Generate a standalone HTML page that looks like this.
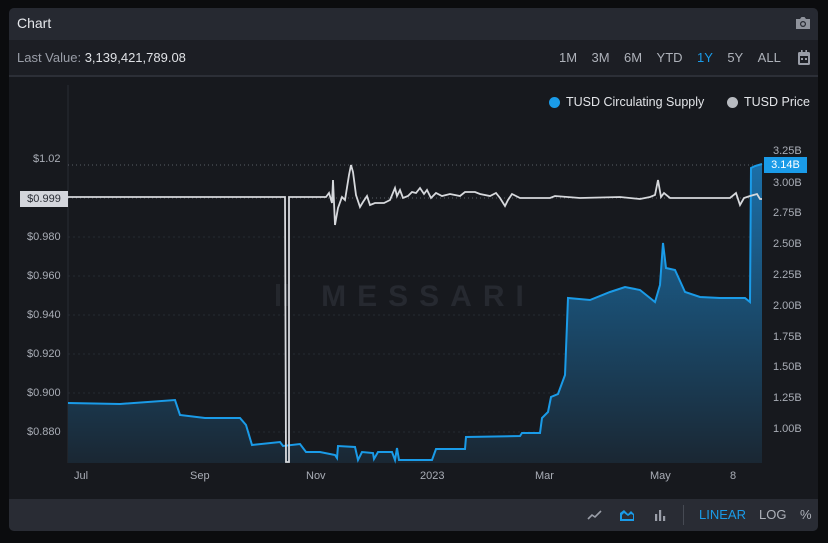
<!DOCTYPE html>
<html><head><style>
*{margin:0;padding:0;box-sizing:border-box}
body{width:828px;height:543px;background:#0b0c0e;font-family:"Liberation Sans",sans-serif;position:relative;overflow:hidden}
.panel{position:absolute;left:9px;top:8px;width:809px;height:523px;background:#17191e;border-radius:5px;overflow:hidden}
.hdr{position:absolute;left:0;top:0;width:100%;height:32px;background:#262931;color:#e6e8ec;font-size:14px;line-height:31px;padding-left:8px}
.row{position:absolute;left:0;top:32px;width:100%;height:37px;background:#1c1e24;border-bottom:2px solid #2c2f37;font-size:13px;line-height:36px;color:#9a9ea8;padding-left:8px}
.row b{font-weight:normal;color:#dfe1e5}
.bot{position:absolute;left:0;bottom:0;width:100%;height:32px;background:#292c34}
.t{position:absolute;font-size:11px;color:#a9adb6;white-space:nowrap}
</style></head><body>
<div class="panel">
<div class="hdr">Chart
<svg style="position:absolute;left:786px;top:8px" width="16" height="14" viewBox="0 0 16 14"><path d="M1 3h4l1.5-2h3L11 3h4v10H1z" fill="#8f939c"/><circle cx="8" cy="8" r="3" fill="#262931"/><circle cx="8" cy="8" r="1.8" fill="#8f939c"/></svg>
</div>
<div class="row">Last Value: <b>3,139,421,789.08</b>
<span style="position:absolute;left:550px;top:0;color:#aeb2ba;word-spacing:0">1M&nbsp;&nbsp;&nbsp;&nbsp;3M&nbsp;&nbsp;&nbsp;&nbsp;6M&nbsp;&nbsp;&nbsp;&nbsp;YTD&nbsp;&nbsp;&nbsp;&nbsp;<span style="color:#1a9be8">1Y</span>&nbsp;&nbsp;&nbsp;&nbsp;5Y&nbsp;&nbsp;&nbsp;&nbsp;ALL</span>
<svg style="position:absolute;left:788px;top:10px" width="14" height="16" viewBox="0 0 14 16"><rect x="1" y="2" width="12" height="13" rx="1.5" fill="#9a9ea8"/><rect x="3" y="6" width="8" height="7" fill="#1c1e24"/><rect x="4" y="0" width="1.6" height="4" fill="#9a9ea8"/><rect x="8.4" y="0" width="1.6" height="4" fill="#9a9ea8"/><rect x="4" y="8" width="2" height="2" fill="#9a9ea8"/><rect x="8" y="8" width="2" height="2" fill="#9a9ea8"/></svg>
</div>
<div class="bot">
<svg style="position:absolute;left:578px;top:10px" width="16" height="12" viewBox="0 0 16 12"><path d="M1 10l4-4 3 2 6-6" stroke="#9a9ea8" stroke-width="1.6" fill="none"/></svg>
<svg style="position:absolute;left:610px;top:9px" width="16" height="14" viewBox="0 0 16 14"><path d="M1 13V5l4-3 4 4 3-3 3 3v7z" fill="#1a9be8"/><path d="M3 11V7l2-2 4 3 3-2 2 1v4z" fill="#292c34"/></svg>
<svg style="position:absolute;left:644px;top:9px" width="14" height="14" viewBox="0 0 14 14"><rect x="2" y="6" width="2.2" height="7" fill="#9a9ea8"/><rect x="6" y="2" width="2.2" height="11" fill="#9a9ea8"/><rect x="10" y="8" width="2.2" height="5" fill="#9a9ea8"/></svg>
<div style="position:absolute;left:674px;top:6px;width:1px;height:20px;background:#464a53"></div>
<span class="t" style="left:690px;top:8px;font-size:13px;color:#1a9be8">LINEAR</span>
<span class="t" style="left:750px;top:8px;font-size:13px;color:#aeb2ba">LOG</span>
<span class="t" style="left:791px;top:8px;font-size:13px;color:#aeb2ba">%</span>
</div>
</div>
<svg style="position:absolute;left:0;top:0" width="828" height="543">
<defs><linearGradient id="g" x1="0" y1="0" x2="0" y2="1"><stop offset="0" stop-color="#1b6fa8"/><stop offset="1" stop-color="#1a2733"/></linearGradient></defs>
<g stroke="#262a31" stroke-width="1" stroke-dasharray="2,3">
<line x1="68" y1="237" x2="762" y2="237"/><line x1="68" y1="276" x2="762" y2="276"/><line x1="68" y1="315" x2="762" y2="315"/><line x1="68" y1="354" x2="762" y2="354"/><line x1="68" y1="393" x2="762" y2="393"/><line x1="68" y1="432" x2="762" y2="432"/>
</g>
<line x1="68" y1="85" x2="68" y2="463" stroke="#2a2d34"/>
<line x1="68" y1="165" x2="762" y2="165" stroke="#5a5e66" stroke-dasharray="1,3"/>
<line x1="68" y1="198" x2="762" y2="198" stroke="#5a5e66" stroke-dasharray="1,3"/>
<rect x="276" y="284" width="4" height="22" fill="#24272d"/><rect x="284" y="284" width="4" height="22" fill="#24272d"/>
<text x="428" y="306" text-anchor="middle" font-family="Liberation Sans" font-weight="bold" font-size="30" letter-spacing="11" fill="#262930">MESSARI</text>
<path d="M68 403L120 404L175 400L180 415L205 418L240 418L246 425L252 445L280 442L283 446L300 444L306 452L320 452L335 455L337 458L338 446L355 447L358 460L362 452L373 453L374 459L378 452L392 452L395 460L397 448L399 460L432 460L436 449L465 449L466 437L520 436L522 433L540 433L542 418L548 412L551 397L558 394L565 375L568 298L590 300L610 292L625 287L640 290L650 298L655 302L660 285L663 243L666 268L675 270L685 292L700 297L720 298L745 298L750 302L751 168L755 166L762 164L762 463L68 463Z" fill="url(#g)" stroke="none"/>
<path d="M68 403L120 404L175 400L180 415L205 418L240 418L246 425L252 445L280 442L283 446L300 444L306 452L320 452L335 455L337 458L338 446L355 447L358 460L362 452L373 453L374 459L378 452L392 452L395 460L397 448L399 460L432 460L436 449L465 449L466 437L520 436L522 433L540 433L542 418L548 412L551 397L558 394L565 375L568 298L590 300L610 292L625 287L640 290L650 298L655 302L660 285L663 243L666 268L675 270L685 292L700 297L720 298L745 298L750 302L751 168L755 166L762 164" fill="none" stroke="#1a9be8" stroke-width="2"/>
<path d="M68 197L285 197L286 462L289 462L289 197L326 197L329 193L332 203L333 180L335 225L338 208L342 197L345 200L349 175L351 165L353 172L356 195L360 207L363 202L367 196L370 205L375 203L384 203L390 200L395 188L397 196L400 190L403 198L408 196L412 192L416 193L420 188L424 194L427 190L431 198L436 193L442 196L450 194L460 196L465 192L475 192L480 194L490 196L496 193L500 198L505 206L508 200L512 194L520 198L550 198L555 196L580 198L620 197L640 199L650 197L655 195L658 180L661 197L664 193L670 198L730 198L736 193L740 205L744 198L750 196L757 194L760 199L762 199" fill="none" stroke="#d6d8dc" stroke-width="1.8"/>
</svg>
<span class="t" style="left:33px;top:153px">$1.02</span>
<div style="position:absolute;left:20px;top:191px;width:48px;height:16px;background:#d4d6dc;color:#2a2d35;font-size:11px;line-height:16px;text-align:center">$0.999</div>
<span class="t" style="left:27px;top:231px">$0.980</span>
<span class="t" style="left:27px;top:270px">$0.960</span>
<span class="t" style="left:27px;top:309px">$0.940</span>
<span class="t" style="left:27px;top:348px">$0.920</span>
<span class="t" style="left:27px;top:387px">$0.900</span>
<span class="t" style="left:27px;top:426px">$0.880</span>
<span class="t" style="left:773px;top:145px">3.25B</span>
<div style="position:absolute;left:764px;top:157px;width:43px;height:16px;background:#1a9be8;color:#fff;font-size:11px;line-height:16px;text-align:center">3.14B</div>
<span class="t" style="left:773px;top:177px">3.00B</span>
<span class="t" style="left:773px;top:207px">2.75B</span>
<span class="t" style="left:773px;top:238px">2.50B</span>
<span class="t" style="left:773px;top:269px">2.25B</span>
<span class="t" style="left:773px;top:300px">2.00B</span>
<span class="t" style="left:773px;top:331px">1.75B</span>
<span class="t" style="left:773px;top:361px">1.50B</span>
<span class="t" style="left:773px;top:392px">1.25B</span>
<span class="t" style="left:773px;top:423px">1.00B</span>
<span class="t" style="left:74px;top:470px">Jul</span>
<span class="t" style="left:190px;top:470px">Sep</span>
<span class="t" style="left:306px;top:470px">Nov</span>
<span class="t" style="left:420px;top:470px">2023</span>
<span class="t" style="left:535px;top:470px">Mar</span>
<span class="t" style="left:650px;top:470px">May</span>
<span class="t" style="left:730px;top:470px">8</span>
<div style="position:absolute;left:549px;top:97px;width:11px;height:11px;border-radius:50%;background:#1a9be8"></div>
<span class="t" style="left:566px;top:95px;font-size:12.5px;color:#e3e5e9">TUSD Circulating Supply</span>
<div style="position:absolute;left:727px;top:97px;width:11px;height:11px;border-radius:50%;background:#b8bbc1"></div>
<span class="t" style="left:744px;top:95px;font-size:12.5px;color:#e3e5e9">TUSD Price</span>
</body></html>
